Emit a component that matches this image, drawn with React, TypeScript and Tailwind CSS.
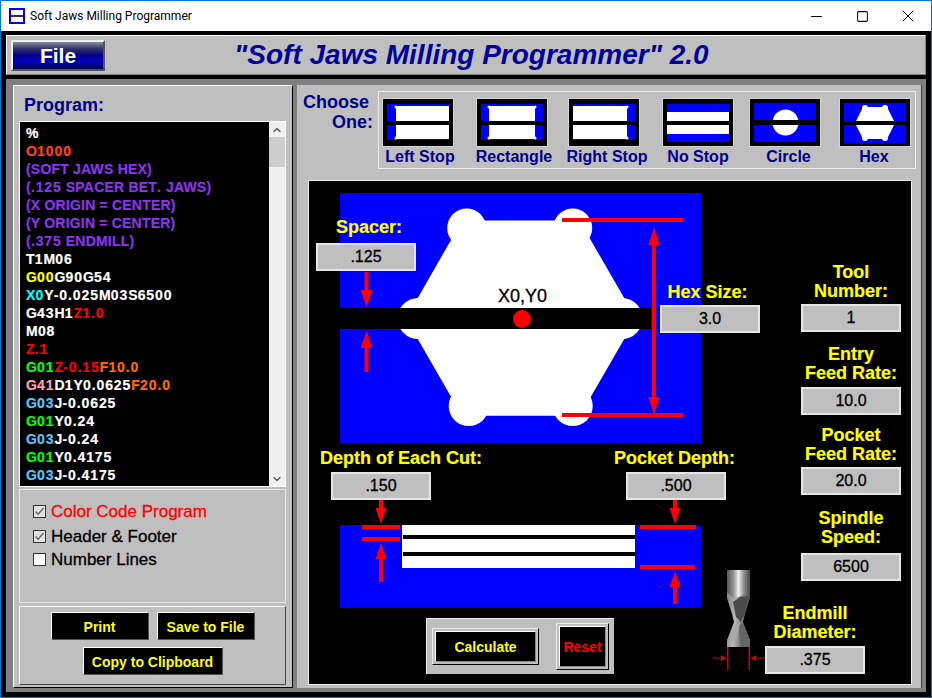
import { ChevronDown, ChevronUp, Minus, Square, X } from 'lucide-react'
import type { ReactNode } from 'react'

const BLUE = '#0000ff'
const RED = '#ff0000'

type Seg = [string, string]

const W = 'text-white'
const PURPLE = 'text-[#8a35e8]'

const program: Seg[][] = [
  [['%', W]],
  [['O1000', 'text-[#ff4020]']],
  [['(SOFT JAWS HEX)', PURPLE]],
  [['(.125 SPACER BET. JAWS)', PURPLE]],
  [['(X ORIGIN = CENTER)', PURPLE]],
  [['(Y ORIGIN = CENTER)', PURPLE]],
  [['(.375 ENDMILL)', PURPLE]],
  [['T1M06', W]],
  [['G00', 'text-[#ffff00]'], ['G90G54', W]],
  [['X0', 'text-[#00ffff]'], ['Y-0.025M03S6500', W]],
  [['G43H1', W], ['Z1.0', 'text-[#ff0000]']],
  [['M08', W]],
  [['Z.1', 'text-[#ff0000]']],
  [['G01', 'text-[#00ff00]'], ['Z-0.15', 'text-[#ff0000]'], ['F10.0', 'text-[#ff6a00]']],
  [['G41', 'text-[#ffa0b4]'], ['D1Y0.0625', W], ['F20.0', 'text-[#ff6a00]']],
  [['G03', 'text-[#50c8ff]'], ['J-0.0625', W]],
  [['G01', 'text-[#00ff00]'], ['Y0.24', W]],
  [['G03', 'text-[#50c8ff]'], ['J-0.24', W]],
  [['G01', 'text-[#00ff00]'], ['Y0.4175', W]],
  [['G03', 'text-[#50c8ff]'], ['J-0.4175', W]],
]

// the listbox font has wider figures than Arial bold
function Code({ text }: { text: string }) {
  return (
    <>
      {text.split(/([0-9.\-]+)/).map((part, i) => (
        <span key={i} className={i % 2 ? 'tracking-[0.9px]' : undefined}>{part}</span>
      ))}
    </>
  )
}

function ArrowV({ x, from, to, head = 17, w = 12 }: { x: number; from: number; to: number; head?: number; w?: number }) {
  // from = tail, to = tip
  const dir = to > from ? 1 : -1
  return (
    <g fill={RED}>
      <rect x={x - 2} width={4} y={Math.min(from, to - dir * head)} height={Math.abs(to - dir * head - from)} />
      <polygon points={`${x},${to} ${x - w / 2},${to - dir * head} ${x + w / 2},${to - dir * head}`} />
    </g>
  )
}

function IconFrame({ children }: { children: ReactNode }) {
  return (
    <svg width={72} height={49} viewBox="0 0 72 49" className="block">
      <rect x={0.5} y={0.5} width={71} height={48} fill="#000" stroke="#d4d4d4" />
      {children}
    </svg>
  )
}

function Bumps({ xs, ys, r = 1.5 }: { xs: number[]; ys: number[]; r?: number }) {
  return (
    <g fill="#fff">
      {xs.map((x) => ys.map((y) => <circle key={`${x}-${y}`} cx={x} cy={y} r={r} />))}
    </g>
  )
}

function LeftStopIcon() {
  return (
    <IconFrame>
      <rect x={5} y={6} width={62} height={36} fill={BLUE} />
      <rect x={14} y={8} width={53} height={33} fill="#fff" />
      <Bumps xs={[14]} ys={[9, 40]} />
      <rect x={5} y={23} width={62} height={4} fill="#000" />
    </IconFrame>
  )
}

function RectangleIcon() {
  return (
    <IconFrame>
      <rect x={5} y={6} width={62} height={36} fill={BLUE} />
      <rect x={13} y={8} width={46} height={33} fill="#fff" />
      <Bumps xs={[13, 59]} ys={[9, 40]} />
      <rect x={5} y={23} width={62} height={4} fill="#000" />
    </IconFrame>
  )
}

function RightStopIcon() {
  return (
    <IconFrame>
      <rect x={5} y={6} width={62} height={36} fill={BLUE} />
      <rect x={5} y={8} width={54} height={33} fill="#fff" />
      <Bumps xs={[59]} ys={[9, 40]} />
      <rect x={5} y={23} width={62} height={4} fill="#000" />
    </IconFrame>
  )
}

function NoStopIcon() {
  return (
    <IconFrame>
      <rect x={5} y={6} width={62} height={38} fill={BLUE} />
      <rect x={5} y={14} width={62} height={22} fill="#fff" />
      <rect x={5} y={23} width={62} height={4} fill="#000" />
    </IconFrame>
  )
}

function CircleIcon() {
  return (
    <IconFrame>
      <rect x={5} y={5} width={62} height={39} fill={BLUE} />
      <circle cx={36.5} cy={24.5} r={13} fill="#fff" />
      <rect x={5} y={22} width={62} height={5} fill="#000" />
    </IconFrame>
  )
}

function HexIcon() {
  return (
    <IconFrame>
      <rect x={5} y={5} width={62} height={40} fill={BLUE} />
      <polygon points="24,9 48,9 56,25 48,41 24,41 16,25" fill="#fff" />
      <Bumps xs={[26, 46]} ys={[10, 40]} r={3} />
      <rect x={5} y={23} width={62} height={4} fill="#000" />
    </IconFrame>
  )
}

function HexDiagram() {
  return (
    <svg width={361} height={250} viewBox="0 0 361 250" className="block">
      <rect width={361} height={250} fill={BLUE} />
      <g fill="#fff">
        <polygon points="126,27.5 240,27.5 250.7,47 290,115 290,136 250.7,204 240,222.7 126,222.7 110,202 72,136 72,115 110,48.7" />
        <circle cx={126.7} cy={35} r={19.5} />
        <circle cx={232.7} cy={35} r={19.5} />
        <circle cx={78} cy={125.5} r={20.5} />
        <circle cx={282} cy={125.5} r={20.5} />
        <circle cx={128.7} cy={213} r={20} />
        <circle cx={232.7} cy={213} r={20} />
      </g>
      <rect x={0} y={115} width={311} height={21} fill="#000" />
      <circle cx={182} cy={126} r={9} fill={RED} />
      <rect x={222} y={25} width={121} height={4} fill={RED} />
      <rect x={222} y={220} width={121} height={4} fill={RED} />
      <g fill={RED}>
        <rect x={312} width={4} y={48} height={158} />
        <polygon points="314,34 308.5,52 319.5,52" />
        <polygon points="314,222 308.5,204 319.5,204" />
      </g>
      <ArrowV x={26.5} from={79} to={114} />
      <ArrowV x={26.5} from={179} to={138} />
    </svg>
  )
}

function DepthDiagram() {
  return (
    <svg width={361} height={108} viewBox="0 0 361 108" className="block">
      <rect y={25} width={361} height={83} fill={BLUE} />
      <rect x={62} y={25} width={233} height={43} fill="#fff" />
      <rect x={63} y={35} width={232} height={4} fill="#000" />
      <rect x={63} y={52} width={232} height={4} fill="#000" />
      <rect x={22} y={25} width={38} height={4} fill={RED} />
      <rect x={22} y={37} width={38} height={4} fill={RED} />
      <rect x={300} y={25} width={56} height={4} fill={RED} />
      <rect x={300} y={65} width={55} height={4} fill={RED} />
      <ArrowV x={41} from={0} to={24} head={16} w={11} />
      <ArrowV x={41} from={82} to={43} head={16} w={11} />
      <ArrowV x={335} from={0} to={24} head={16} w={11} />
      <ArrowV x={335} from={104} to={71} head={16} w={11} />
    </svg>
  )
}

function Endmill() {
  return (
    <svg width={52} height={100} viewBox="0 0 52 100" className="block">
      <defs>
        <linearGradient id="shank" x1="0" x2="1" y1="0" y2="0">
          <stop offset="0" stopColor="#555" />
          <stop offset="0.3" stopColor="#999" />
          <stop offset="0.5" stopColor="#f2f2f2" />
          <stop offset="0.75" stopColor="#888" />
          <stop offset="1" stopColor="#444" />
        </linearGradient>
        <linearGradient id="flute" x1="0" x2="1" y1="0" y2="0.3">
          <stop offset="0" stopColor="#777" />
          <stop offset="0.5" stopColor="#b8b8b8" />
          <stop offset="1" stopColor="#4a4a4a" />
        </linearGradient>
      </defs>
      <path d="M14 0H37V28L32 44L30 52L33 60L37 70V77H14V70L18 60L21 52L19 44L14 28Z" fill="url(#flute)" />
      <path d="M14 0H37V20L28 26L20 28L14 22Z" fill="url(#shank)" />
      <path d="M20 32L27 27L36 26L32 42L28 52L23 47Z" fill="#4a4a4a" />
      <path d="M25 56L30 53L37 70V77H28Z" fill="#666" />
      <path d="M20 58L27 52L24 70L16 72Z" fill="#a8a8a8" />
      <g fill="#d00000">
        <rect x={14} y={77} width={1.5} height={23} />
        <rect x={35.5} y={77} width={1.5} height={23} />
        <rect x={0} y={87.5} width={9} height={1} />
        <rect x={41} y={87.5} width={11} height={1} />
        <polygon points="13.5,88 8,85 8,91" />
        <polygon points="37.5,88 43,85 43,91" />
      </g>
    </svg>
  )
}

function ValueBox({ value }: { value: string }) {
  return (
    <div className="w-[100px] h-[28px] shrink-0 flex items-center justify-center bg-[#bfbfbf] border-2 border-[#e6e6e6] text-[16px] leading-none text-black [-webkit-text-stroke:0.3px_#000]">
      {value}
    </div>
  )
}

function Label({ children }: { children: ReactNode }) {
  return <div className="text-[18px] leading-[19px] font-bold text-[#ffff00] text-center whitespace-nowrap [-webkit-text-stroke:0.2px_#ffff00]">{children}</div>
}

function Check({ checked, label, red, className }: { checked?: boolean; label: string; red?: boolean; className?: string }) {
  return (
    <div className={`flex items-center gap-[5px] h-[20px] ${className ?? ''}`}>
      <div className={`w-[13px] h-[13px] border border-[#333] flex items-center justify-center ${checked ? 'bg-[#e2e2e2]' : 'bg-white'}`}>
        {checked && (
          <svg width={11} height={11} viewBox="0 0 11 11">
            <path d="M1.5 5.5L4.2 8.2L9.5 2" fill="none" stroke="#666" strokeWidth={1.5} />
          </svg>
        )}
      </div>
      <span className={`text-[17px] leading-none [-webkit-text-stroke:0.3px_currentColor] ${red ? 'text-[#ff0000]' : 'text-black'}`}>{label}</span>
    </div>
  )
}

function BlackButton({ label, width }: { label: string; width: string }) {
  return (
    <button className={`${width} h-[28px] pt-[2px] bg-black border border-t-white border-l-white border-r-[#555] border-b-[#555] text-[14px] font-bold text-[#ffff00]`}>
      {label}
    </button>
  )
}

function RaisedButton({ label, className, color }: { label: string; className: string; color: string }) {
  return (
    <button className={`${className} p-[2px] bg-[#bfbfbf] border border-t-[#eeeeee] border-l-[#eeeeee] border-r-black border-b-black`}>
      <span className={`w-full h-full pt-[2px] flex items-center justify-center bg-black border border-t-white border-l-white border-r-[#888] border-b-[#888] text-[14px] font-bold ${color}`}>
        {label}
      </span>
    </button>
  )
}

const shapes = [
  { label: 'Left Stop', icon: <LeftStopIcon />, cls: 'ml-[3px]', labelCls: 'pl-[4px]' },
  { label: 'Rectangle', icon: <RectangleIcon />, cls: 'ml-[22px]', labelCls: 'pl-[4px]' },
  { label: 'Right Stop', icon: <RightStopIcon />, cls: 'ml-[20px]', labelCls: 'pl-[6px]' },
  { label: 'No Stop', icon: <NoStopIcon />, cls: 'ml-[22px]', labelCls: '' },
  { label: 'Circle', icon: <CircleIcon />, cls: 'ml-[15px]', labelCls: 'pl-[7px]' },
  { label: 'Hex', icon: <HexIcon />, cls: 'ml-[18px]', labelCls: 'pr-[2px]' },
]

export default function App() {
  return (
    <div className="w-[932px] h-[698px] flex flex-col overflow-hidden bg-black border border-[#0078d7] font-['Liberation_Sans',Arial,sans-serif]">
      {/* title bar */}
      <div className="h-[30px] shrink-0 bg-white flex items-center pl-[8px]">
        <svg width={16} height={16} viewBox="0 0 16 16">
          <rect x={1} y={1} width={14} height={14} fill="#fff" stroke="#0000ff" strokeWidth={2} />
          <rect x={2} y={7} width={12} height={2} fill="#333" />
        </svg>
        <span className="ml-[5px] text-[12px] text-black font-['Roboto',sans-serif]">Soft Jaws Milling Programmer</span>
        <div className="ml-auto flex items-center text-black">
          <div className="w-[46px] flex justify-center"><Minus size={17} strokeWidth={1.4} /></div>
          <div className="w-[46px] flex justify-center"><Square size={13} strokeWidth={1.85} /></div>
          <div className="w-[46px] flex justify-center"><X size={20} strokeWidth={1.2} /></div>
        </div>
      </div>

      {/* header */}
      <div className="mt-[4px] ml-[5px] w-[920px] h-[40px] shrink-0 flex items-center bg-[#bfbfbf] border border-t-white border-l-white border-r-[#808080] border-b-[#808080]">
        <button className="ml-[4px] w-[94px] h-[31px] border-2 border-t-[#eee] border-l-[#eee] border-r-[#555] border-b-[#555] bg-[linear-gradient(#8f8f98_0%,#30306a_25%,#00008b_50%,#0000c0_72%,#000050_100%)] text-white text-[21px] leading-none font-bold">
          File
        </button>
        <h1 className="ml-[129px] text-[28px] leading-none font-bold italic text-[#00009c] whitespace-nowrap">
          "Soft Jaws Milling Programmer" 2.0
        </h1>
      </div>

      {/* main */}
      <div className="mt-[4px] ml-[5px] w-[920px] h-[613px] shrink-0 flex bg-[#808080] pt-[6px] pl-[7px] gap-[4px]">
        {/* left panel */}
        <div className="w-[280px] h-[603px] flex flex-col bg-[#bfbfbf] border border-t-white border-l-white border-r-black border-b-black pl-[5px]">
          <div className="mt-[9px] ml-[5px] h-[21px] text-[18px] leading-[21px] font-bold text-[#00008b]">Program:</div>
          <div className="mt-[5px] w-[267px] h-[366px] flex border border-white bg-black">
            <div className="flex-1 pl-[6px] pt-[2px] font-bold text-[14px] leading-[18px] tracking-[0.2px] [-webkit-text-stroke:0.2px_currentColor]">
              {program.map((line, i) => (
                <div key={i} className="whitespace-nowrap">
                  {line.map(([text, color], j) => (
                    <span key={j} className={color}><Code text={text} /></span>
                  ))}
                </div>
              ))}
            </div>
            <div className="w-[16px] flex flex-col bg-[#f0f0f0] text-[#555]">
              <div className="h-[15px] flex items-center justify-center"><ChevronUp size={12} strokeWidth={2.5} /></div>
              <div className="h-[30px] bg-[#cdcdcd]" />
              <div className="mt-auto h-[15px] flex items-center justify-center"><ChevronDown size={12} strokeWidth={2.5} /></div>
            </div>
          </div>
          <div className="mt-[2px] w-[267px] h-[114px] border border-[#e8e8e8] pl-[13px] pt-[11px] flex flex-col">
            <Check checked red label="Color Code Program" />
            <Check checked label="Header & Footer" className="mt-[5px]" />
            <Check label="Number Lines" className="mt-[3px]" />
          </div>
          <div className="mt-[3px] w-[267px] h-[79px] border border-t-white border-l-white border-r-[#444] border-b-[#444] flex flex-col items-center pt-[5px] gap-[7px]">
            <div className="flex gap-[8px]">
              <BlackButton label="Print" width="w-[98px]" />
              <BlackButton label="Save to File" width="w-[98px]" />
            </div>
            <BlackButton label="Copy to Clipboard" width="w-[140px]" />
          </div>
        </div>

        {/* right panel */}
        <div className="w-[625px] h-[603px] flex flex-col bg-[#bfbfbf] border-r border-[#444] pl-[6px]">
          <div className="flex mt-[6px] h-[78px]">
            <div className="w-[70px] pt-[1px] text-[18px] leading-[20px] font-bold text-[#00008b] text-right">
              <div className="pr-[6px]">Choose</div>
              <div>One:</div>
            </div>
            <div className="ml-[5px] w-[538px] h-[78px] flex border border-[#eeeeee] pt-[6px]">
              {shapes.map((s) => (
                <div key={s.label} className={`w-[72px] flex flex-col items-center ${s.cls}`}>
                  {s.icon}
                  <span className={`mt-[1px] text-[16px] leading-[18px] font-bold text-[#00008b] whitespace-nowrap ${s.labelCls}`}>{s.label}</span>
                </div>
              ))}
            </div>
          </div>

          {/* canvas */}
          <div className="relative mt-[11px] ml-[5px] w-[604px] h-[505px] flex bg-black border border-[#eeeeee] text-[#ffff00]">
            <div className="relative ml-[31px] mt-[12px] w-[361px] flex flex-col">
              <HexDiagram />
              <div className="-ml-[20px] -mr-[34px] mt-[6px] flex justify-between">
                <div className="flex flex-col items-start">
                  <Label>Depth of Each Cut:</Label>
                  <div className="mt-[4px] ml-[11px]"><ValueBox value=".150" /></div>
                </div>
                <div className="flex flex-col items-center">
                  <Label>Pocket Depth:</Label>
                  <div className="mt-[4px] ml-[3px]"><ValueBox value=".500" /></div>
                </div>
              </div>
              <DepthDiagram />
              <div className="ml-[86px] mt-[10px] w-[188px] h-[56px] flex items-center bg-[#bfbfbf] border-t border-l border-[#eeeeee]">
                <RaisedButton label="Calculate" color="text-[#ffff00]" className="ml-[5px] w-[107px] h-[37px]" />
                <RaisedButton label="Reset" color="text-[#ff0000]" className="ml-[17px] w-[53px] h-[47px]" />
              </div>
              {/* overlays on the drawing */}
              <div className="absolute left-[-24px] top-[25px] w-[100px] flex flex-col items-center">
                <div className="pl-[6px]"><Label>Spacer:</Label></div>
                <div className="mt-[6px]"><ValueBox value=".125" /></div>
              </div>
              <div className="absolute left-[158px] top-[94px] text-[18px] leading-[19px] text-black [-webkit-text-stroke:0.3px_#000]">X0,Y0</div>
              <div className="absolute left-[320px] top-[90px] w-[100px] flex flex-col items-center">
                <div className="pr-[5px]"><Label>Hex Size:</Label></div>
                <div className="mt-[3px]"><ValueBox value="3.0" /></div>
              </div>
            </div>

            {/* right column */}
            <div className="ml-[12px] w-[198px] flex flex-col">
              <div className="ml-[88px] w-[100px] mt-[82px]">
                <Label>Tool<br />Number:</Label>
                <div className="mt-[3px]"><ValueBox value="1" /></div>
                <div className="mt-[13px]"><Label>Entry<br />Feed Rate:</Label></div>
                <div className="mt-[4px]"><ValueBox value="10.0" /></div>
                <div className="mt-[11px]"><Label>Pocket<br />Feed Rate:</Label></div>
                <div className="mt-[3px]"><ValueBox value="20.0" /></div>
                <div className="mt-[14px]"><Label>Spindle<br />Speed:</Label></div>
                <div className="mt-[6px]"><ValueBox value="6500" /></div>
              </div>
              <div className="-mt-[11px] flex">
                <Endmill />
                <div className="w-[100px] pt-[34px]">
                  <Label>Endmill<br />Diameter:</Label>
                  <div className="mt-[4px]"><ValueBox value=".375" /></div>
                </div>
              </div>
            </div>
          </div>
        </div>
      </div>
    </div>
  )
}
